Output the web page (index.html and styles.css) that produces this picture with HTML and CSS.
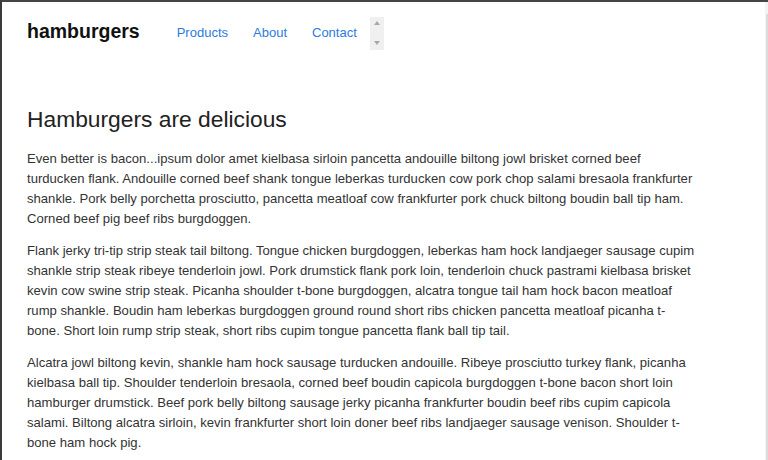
FILE: index.html
```html
<!DOCTYPE html>
<html lang="en">
<head>
<meta charset="utf-8">
<title>hamburgers</title>
<link rel="stylesheet" href="styles.css">
</head>
<body>
<div class="frame">
  <div class="page">
    <header class="site-header">
      <div class="logo">hamburgers</div>
      <nav class="nav">
        <a href="#" class="nav-link">Products</a>
        <a href="#" class="nav-link">About</a>
        <a href="#" class="nav-link">Contact</a>
      </nav>
      <div class="nav-scroll" aria-hidden="true">
        <span class="arrow arrow-up"></span>
        <span class="arrow arrow-down"></span>
      </div>
    </header>
    <main class="content">
      <h1 class="title">Hamburgers are delicious</h1>
      <p class="para">Even better is bacon...ipsum dolor amet kielbasa sirloin pancetta andouille biltong jowl brisket corned beef turducken flank. Andouille corned beef shank tongue leberkas turducken cow pork chop salami bresaola frankfurter shankle. Pork belly porchetta prosciutto, pancetta meatloaf cow frankfurter pork chuck biltong boudin ball tip ham. Corned beef pig beef ribs burgdoggen.</p>
      <p class="para">Flank jerky tri-tip strip steak tail biltong. Tongue chicken burgdoggen, leberkas ham hock landjaeger sausage cupim shankle strip steak ribeye tenderloin jowl. Pork drumstick flank pork loin, tenderloin chuck pastrami kielbasa brisket kevin cow swine strip steak. Picanha shoulder t-bone burgdoggen, alcatra tongue tail ham hock bacon meatloaf rump shankle. Boudin ham leberkas burgdoggen ground round short ribs chicken pancetta meatloaf picanha t-bone. Short loin rump strip steak, short ribs cupim tongue pancetta flank ball tip tail.</p>
      <p class="para">Alcatra jowl biltong kevin, shankle ham hock sausage turducken andouille. Ribeye prosciutto turkey flank, picanha kielbasa ball tip. Shoulder tenderloin bresaola, corned beef boudin capicola burgdoggen t-bone bacon short loin hamburger drumstick. Beef pork belly biltong sausage jerky picanha frankfurter boudin beef ribs cupim capicola salami. Biltong alcatra sirloin, kevin frankfurter short loin doner beef ribs landjaeger sausage venison. Shoulder t-bone ham hock pig.</p>
    </main>
  </div>
  <div class="scrollbar"><div class="thumb"></div></div>
</div>
</body>
</html>
```

FILE: styles.css
```css
html, body {
  margin: 0;
  padding: 0;
  height: 460px;
  overflow: hidden;
  background: #ffffff;
}

.frame {
  display: flex;
  height: 460px;
  box-sizing: border-box;
  border-top: 2px solid #454545;
  border-left: 2px solid #3a3a3a;
  font-family: "Liberation Sans", Arial, sans-serif;
}

.page {
  flex: 1;
  min-width: 0;
  overflow: hidden;
}

.scrollbar {
  width: 3px;
  background: #f3f3f3;
  display: flex;
  flex-direction: column;
  padding-top: 12px;
}

.thumb {
  flex: 1;
  margin-left: 1px;
  width: 2px;
  background: #dcdcdc;
}

.site-header {
  display: flex;
  align-items: flex-start;
  padding: 15px 0 0 25px;
}

.logo {
  margin-top: 3px;
  font-size: 19.5px;
  line-height: 22px;
  font-weight: bold;
  color: #111111;
}

.nav {
  display: flex;
  gap: 25px;
  margin-left: 37px;
  margin-top: 6px;
}

.nav-link {
  font-size: 13px;
  line-height: 20px;
  color: #2b7bdc;
  text-decoration: none;
}

.nav-scroll {
  width: 14px;
  height: 33px;
  margin-left: 13px;
  background: #f0f0f0;
  display: flex;
  flex-direction: column;
  align-items: center;
  justify-content: space-between;
  padding: 4px 0 5px;
  box-sizing: border-box;
}

.arrow {
  width: 0;
  height: 0;
  border-left: 3.5px solid transparent;
  border-right: 3.5px solid transparent;
}

.arrow-up {
  border-bottom: 4px solid #a8a8a8;
}

.arrow-down {
  border-top: 4px solid #a8a8a8;
}

.content {
  padding: 56px 0 0 25px;
}

.title {
  margin: 0 0 16px;
  font-size: 22.8px;
  font-weight: normal;
  color: #222222;
}

.para {
  margin: 0 0 12px;
  max-width: 668.5px;
  font-size: 13.1px;
  line-height: 20px;
  color: #333333;
}
```
